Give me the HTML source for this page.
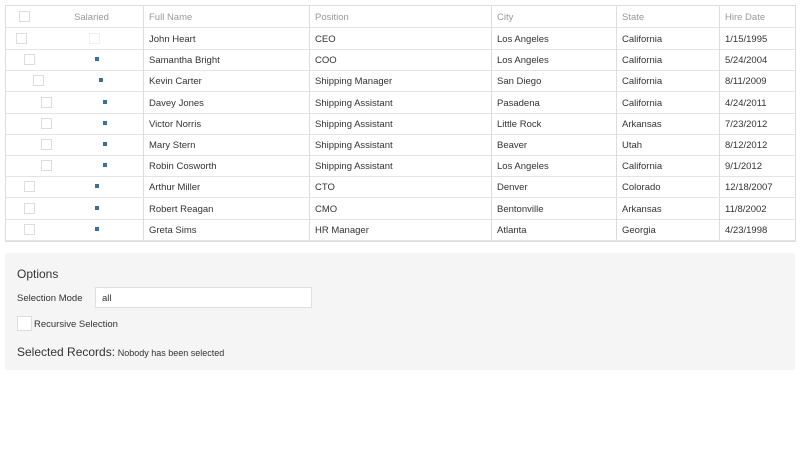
<!DOCTYPE html>
<html><head><style>
body{margin:0;width:800px;height:450px;background:#fff;font-family:"Liberation Sans",sans-serif;font-size:9.5px;color:#333;position:relative;overflow:hidden}
.t{position:absolute;left:5px;top:5px;width:789px;height:235px;border:1px solid #ddd}
.h,.r{position:absolute;left:0;width:789px;height:21px;border-bottom:1px solid #e4e4e4}
.h{color:#999}
.c{position:absolute;top:0;height:21px;line-height:23px;padding-left:5px;box-sizing:border-box}
.v{border-left:1px solid #ddd}
.cb{position:absolute;width:9px;height:9px;border:1px solid #ddd;background:#fff;top:5px}
.sq{position:absolute;width:4px;height:4px;background:#3a6f9a;top:8px}
.p{position:absolute;left:5px;top:253px;width:790px;height:117px;background:#f5f5f5}
.p div{line-height:1.3}
</style></head><body>
<div class="t">
<div class="h" style="top:0">
<div class="cb" style="left:13px"></div>
<div class="c" style="left:0;width:137px;text-align:center;padding-left:34px">Salaried</div>
<div class="c v" style="left:137px">Full Name</div>
<div class="c v" style="left:303px">Position</div>
<div class="c v" style="left:485px">City</div>
<div class="c v" style="left:610px">State</div>
<div class="c v" style="left:713px">Hire Date</div>
</div>
<div id="rows"></div>
</div>
<div class="p">
<div style="position:absolute;left:12px;top:14px;font-size:12px;color:#333">Options</div>
<div style="position:absolute;left:12px;top:40px">Selection Mode</div>
<div style="position:absolute;left:90px;top:34px;width:217px;height:21px;background:#fff;border:1px solid #e0e0e0;line-height:21px;padding-left:6px;box-sizing:border-box">all</div>
<div style="position:absolute;left:12px;top:63px;width:13px;height:13px;background:#fff;border:1px solid #ddd"></div>
<div style="position:absolute;left:29px;top:66px">Recursive Selection</div>
<div style="position:absolute;left:12px;top:92px"><span style="font-size:12px">Selected Records:</span> <span style="font-size:9px">Nobody has been selected</span></div>
</div>
<script>
var d=[["John Heart","CEO","Los Angeles","California","1/15/1995",10,-1],
["Samantha Bright","COO","Los Angeles","California","5/24/2004",18,89],
["Kevin Carter","Shipping Manager","San Diego","California","8/11/2009",27,93],
["Davey Jones","Shipping Assistant","Pasadena","California","4/24/2011",35,97],
["Victor Norris","Shipping Assistant","Little Rock","Arkansas","7/23/2012",35,97],
["Mary Stern","Shipping Assistant","Beaver","Utah","8/12/2012",35,97],
["Robin Cosworth","Shipping Assistant","Los Angeles","California","9/1/2012",35,97],
["Arthur Miller","CTO","Denver","Colorado","12/18/2007",18,89],
["Robert Reagan","CMO","Bentonville","Arkansas","11/8/2002",18,89],
["Greta Sims","HR Manager","Atlanta","Georgia","4/23/1998",18,89]];
var h="";d.forEach(function(r,i){var t=22+i*21.2;
h+='<div class="r" style="top:'+t+'px"><div class="cb" style="left:'+r[5]+'px"></div>'+(r[6]<0?'<div class="cb" style="left:83px;border-color:#f0f0f0"></div>':'<div class="sq" style="left:'+r[6]+'px"></div>')+
'<div class="c v" style="left:137px">'+r[0]+'</div><div class="c v" style="left:303px">'+r[1]+'</div><div class="c v" style="left:485px">'+r[2]+'</div><div class="c v" style="left:610px">'+r[3]+'</div><div class="c v" style="left:713px">'+r[4]+'</div></div>';});
document.getElementById("rows").innerHTML=h;
</script>
</body></html>
